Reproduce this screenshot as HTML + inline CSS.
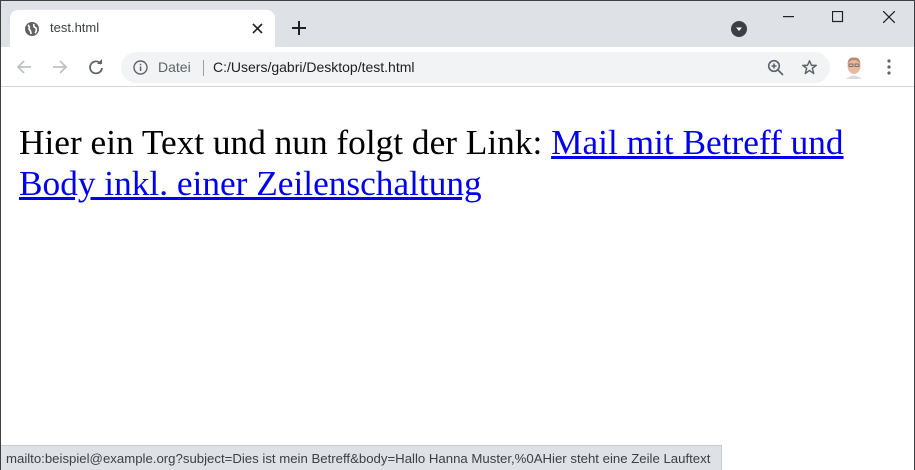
<!DOCTYPE html>
<html><head><meta charset="utf-8"><style>
*{margin:0;padding:0;box-sizing:border-box}
body{width:915px;height:470px;overflow:hidden;background:#fff;font-family:"Liberation Sans",sans-serif;position:relative}
.frame{position:absolute;inset:0;border:1px solid #3c4043;border-bottom:none;pointer-events:none;z-index:9}
.strip{position:absolute;left:0;top:0;width:915px;height:47px;background:#dee1e6}
.tab{position:absolute;left:10px;top:10px;width:265px;height:37px;background:#fff;border-radius:8px 8px 0 0}
.tab .t{position:absolute;left:40px;top:10px;font-size:13px;color:#3c4043}
.tool{position:absolute;left:0;top:47px;width:915px;height:40px;background:#fff;border-bottom:1px solid #d6d6d6}
.omni{position:absolute;left:121px;top:5px;width:709px;height:31px;background:#f1f3f4;border-radius:16px}
.omni .d{position:absolute;left:37px;top:7px;font-size:14px;color:#5f6368}
.omni .u{position:absolute;left:92px;top:7px;font-size:14px;color:#202124}
.omni .sep{position:absolute;left:82px;top:8px;width:1px;height:16px;background:#9aa0a6}
.content{position:absolute;left:19px;top:122px;width:870px;font-family:"Liberation Serif",serif;font-size:35.3px;line-height:41px;color:#000}
.content a{color:#0000ee;text-decoration:underline}
.status{position:absolute;left:0;top:445px;width:722px;height:25px;background:#dee1e6;border-top:1px solid #c8cbd0;border-right:1px solid #c8cbd0;font-size:13.2px;color:#3c4043;padding:5px 0 0 6px;white-space:nowrap}
svg{position:absolute}
</style></head><body>
<div class="strip"></div>
<div class="tab"><svg style="left:14px;top:11px" width="16" height="16" viewBox="0 0 16 16"><circle cx="8" cy="8" r="7" fill="#5f6368"/><path d="M4 4 Q6 6 5 8 Q7 10 7 13 M10 3 Q9 6 12 7 Q13 10 11 12" stroke="#fff" stroke-width="1.6" fill="none"/></svg><span class="t">test.html</span>
<svg style="left:242px;top:13px" width="11" height="11" viewBox="0 0 11 11"><path d="M1 1L10 10M10 1L1 10" stroke="#202124" stroke-width="1.6"/></svg></div>
<svg style="left:292px;top:21px" width="14" height="14" viewBox="0 0 14 14"><path d="M7 0V14M0 7H14" stroke="#202124" stroke-width="2"/></svg>
<svg style="left:731px;top:21px" width="16" height="16" viewBox="0 0 16 16"><circle cx="8" cy="8" r="8" fill="#3c4043"/><path d="M5 6.5H11L8 10Z" fill="#fff"/></svg>
<svg style="left:783px;top:16px" width="12" height="2"><rect width="11" height="1.2" fill="#202124"/></svg>
<svg style="left:832px;top:11px" width="12" height="12"><rect x=".5" y=".5" width="10" height="10" fill="none" stroke="#202124" stroke-width="1.2"/></svg>
<svg style="left:883px;top:11px" width="12" height="12" viewBox="0 0 12 12"><path d="M0 0L12 12M12 0L0 12" stroke="#202124" stroke-width="1.3"/></svg>
<div class="tool">
<svg style="left:16px;top:12px" width="16" height="16" viewBox="0 0 16 16"><path d="M15 8H2M8 2L2 8L8 14" stroke="#bdc1c6" stroke-width="1.8" fill="none"/></svg>
<svg style="left:52px;top:12px" width="16" height="16" viewBox="0 0 16 16"><path d="M1 8H14M8 2L14 8L8 14" stroke="#bdc1c6" stroke-width="1.8" fill="none"/></svg>
<svg style="left:88px;top:12px" width="16" height="16" viewBox="0 0 16 16"><path d="M13 5A6 6 0 1 0 14 9" stroke="#5f6368" stroke-width="1.8" fill="none"/><path d="M9 5H14V0Z" fill="#5f6368"/></svg>
<div class="omni">
<svg style="left:12px;top:8px" width="15" height="15" viewBox="0 0 15 15"><circle cx="7.5" cy="7.5" r="6.5" fill="none" stroke="#5f6368" stroke-width="1.4"/><rect x="6.8" y="6.5" width="1.5" height="4.5" fill="#5f6368"/><rect x="6.8" y="3.8" width="1.5" height="1.5" fill="#5f6368"/></svg>
<span class="d">Datei</span><div class="sep"></div><span class="u">C:/Users/gabri/Desktop/test.html</span>
<svg style="left:646px;top:7px" width="17" height="17" viewBox="0 0 17 17"><circle cx="7" cy="7" r="5.3" fill="none" stroke="#5f6368" stroke-width="1.6"/><path d="M11 11L16 16M4.5 7H9.5M7 4.5V9.5" stroke="#5f6368" stroke-width="1.6"/></svg>
<svg style="left:680px;top:7px" width="17" height="17" viewBox="0 0 24 24"><path d="M12 2.5L14.8 9H21.5L16 13.2L18 20.5L12 16.2L6 20.5L8 13.2L2.5 9H9.2Z" fill="none" stroke="#5f6368" stroke-width="2" stroke-linejoin="round"/></svg>
</div>
<svg style="left:843px;top:8px" width="22" height="24" viewBox="0 0 22 24"><rect width="22" height="24" fill="#fff"/><ellipse cx="11" cy="11" rx="6.5" ry="8" fill="#e6b9a0"/><path d="M4.5 9Q5 2 11 2.5Q17 2 17.5 9Q15 5 11 5Q7 5 4.5 9Z" fill="#b58b6c"/><rect x="6" y="9" width="4" height="2.5" fill="none" stroke="#555" stroke-width=".7"/><rect x="12" y="9" width="4" height="2.5" fill="none" stroke="#555" stroke-width=".7"/><path d="M3 24Q11 17 19 24Z" fill="#dcdcdc"/></svg>
<svg style="left:887px;top:12px" width="4" height="16"><circle cx="2" cy="2" r="1.6" fill="#5f6368"/><circle cx="2" cy="8" r="1.6" fill="#5f6368"/><circle cx="2" cy="14" r="1.6" fill="#5f6368"/></svg>
</div>
<div class="content">Hier ein Text und nun folgt der Link: <a>Mail mit Betreff und Body inkl. einer Zeilenschaltung</a></div>
<div class="status">mailto:beispiel@example.org?subject=Dies ist mein Betreff&amp;body=Hallo Hanna Muster,%0AHier steht eine Zeile Lauftext</div>
<div class="frame"></div>
</body></html>
